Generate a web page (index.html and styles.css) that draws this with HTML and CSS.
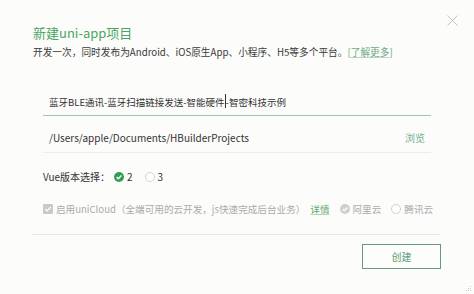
FILE: index.html
```html
<!DOCTYPE html>
<html>
  <head>
    <meta charset="utf-8" />
    <meta name="viewport" content="width=device-width, initial-scale=1" />
    <link rel="stylesheet" href="styles.css">
  </head>
  <body>
    <div class="dialog">
      <span class="close">
        <svg width="11" height="11" viewBox="0 0 11 11">
          <path d="M0.5 0.5 L10.5 10.5 M10.5 0.5 L0.5 10.5" stroke="#c4c4c4" stroke-width="1" fill="none" />
        </svg>
      </span>
      <div class="header">
        <div class="title">新建uni-app项目</div>
        <div class="subtitle">开发一次，同时发布为Android、iOS原生App、小程序、H5等多个平台。<a class="more">[了解更多]</a></div>
      </div>

      <div class="form">
        <div class="field field-name">
          <span class="value">蓝牙BLE通讯-蓝牙扫描链接发送-智能硬件<span class="caret"></span>-智密科技示例</span>
        </div>
        <div class="field field-path">
          <span class="value">/Users/apple/Documents/HBuilderProjects</span>
          <span class="browse">浏览</span>
        </div>

        <div class="row row-vue">
          <span class="label">Vue版本选择：</span>
          <span class="option">
            <svg class="icon" width="10" height="10" viewBox="0 0 10 10">
              <circle cx="5" cy="5" r="5" fill="#2f9e52" />
              <path d="M2.6 5.1 L4.3 6.7 L7.4 3.5" stroke="#fff" stroke-width="1.4" fill="none" />
            </svg>
            2
          </span>
          <span class="option">
            <svg class="icon" width="10" height="10" viewBox="0 0 10 10">
              <circle cx="5" cy="5" r="4.5" fill="#fff" stroke="#d2d2d2" stroke-width="1" />
            </svg>
            3
          </span>
        </div>

        <div class="row row-cloud">
          <svg class="icon" width="10" height="10" viewBox="0 0 10 10">
            <rect x="0" y="0" width="10" height="10" rx="1" fill="#c9c9c9" />
            <path d="M2.3 5 L4.2 6.9 L7.8 3" stroke="#fff" stroke-width="1.3" fill="none" />
          </svg>
          <span class="cloud-text">启用uniCloud（全端可用的云开发，js快速完成后台业务）</span>
          <a class="detail">详情</a>
          <span class="option">
            <svg class="icon" width="10" height="10" viewBox="0 0 10 10">
              <circle cx="5" cy="5" r="5" fill="#cfcfcf" />
              <path d="M2.6 5.1 L4.3 6.7 L7.4 3.5" stroke="#fff" stroke-width="1.3" fill="none" />
            </svg>
            阿里云
          </span>
          <span class="option">
            <svg class="icon" width="10" height="10" viewBox="0 0 10 10">
              <circle cx="5" cy="5" r="4.5" fill="#fff" stroke="#cfcfcf" stroke-width="1" />
            </svg>
            腾讯云
          </span>
        </div>
      </div>

      <div class="divider"></div>

      <div class="footer">
        <button class="btn-create">创建</button>
      </div>

      <span class="grip">
        <svg width="6" height="6" viewBox="0 0 6 6">
          <rect x="4" y="0" width="1" height="1" fill="#c8c8c8" />
          <rect x="2" y="2" width="1" height="1" fill="#c8c8c8" />
          <rect x="4" y="2" width="1" height="1" fill="#c8c8c8" />
          <rect x="0" y="4" width="1" height="1" fill="#c8c8c8" />
          <rect x="2" y="4" width="1" height="1" fill="#c8c8c8" />
          <rect x="4" y="4" width="1" height="1" fill="#c8c8c8" />
        </svg>
      </span>
    </div>
  </body>
</html>
```

FILE: styles.css
```css
html,
body,
div {
  margin: 0;
  padding: 0;
  box-sizing: border-box;
}

body {
  background-color: #fcfcfa;
  font-family: "Noto Sans CJK SC", sans-serif;
  color: #333333;
}

.dialog {
  position: relative;
  height: 294px;
  padding-top: 25px;
}

.close {
  position: absolute;
  top: 15px;
  right: 16px;
  line-height: 0;
}

.header {
  padding-left: 33px;
}
.header .title {
  font-size: 13px;
  line-height: 16px;
  color: #4aa462;
}
.header .subtitle {
  margin-top: 4px;
  font-size: 9.7px;
  line-height: 14px;
  color: #3a3a3a;
}
.header .more {
  color: #6aa884;
  text-decoration: underline;
  text-decoration-color: #b9d6c4;
}

.form {
  margin: 27px 43px 0;
}

.field {
  display: flex;
  align-items: center;
  justify-content: space-between;
  padding: 0 6px;
  font-size: 10px;
  line-height: 16px;
  white-space: nowrap;
}
.field-name {
  padding-top: 8px;
  padding-bottom: 5px;
  font-size: 9.5px;
  border-bottom: 1px solid #9ccaa9;
}
.field-path {
  padding-top: 14px;
  padding-bottom: 6px;
  border-bottom: 1px solid #ececea;
}
.field .caret {
  display: inline-block;
  width: 1px;
  height: 14px;
  background-color: #333;
  vertical-align: -2px;
}
.field .browse {
  color: #78b08f;
  font-size: 10px;
}

.row {
  display: flex;
  align-items: center;
  font-size: 10px;
  line-height: 16px;
  white-space: nowrap;
}
.row .icon {
  display: block;
  flex-shrink: 0;
}
.row .option {
  display: flex;
  align-items: center;
  gap: 3px;
}

.row-vue {
  margin-top: 16px;
}
.row-vue .label {
  width: 71px;
}
.row-vue .option {
  margin-right: 12px;
}

.row-cloud {
  margin-top: 16px;
  font-size: 9.6px;
  color: #ababab;
}
.row-cloud .cloud-text {
  margin-left: 3px;
}
.row-cloud .detail {
  margin-left: 5px;
  color: #5aaa6c;
  text-decoration: underline;
  text-decoration-color: #b5d8bd;
}
.row-cloud .option {
  margin-left: 10px;
}

.divider {
  margin: 17px 34px 0 32px;
  border-top: 1px solid #e8e8e6;
}

.footer {
  display: flex;
  justify-content: flex-end;
  padding: 9px 33px 0 0;
}
.btn-create {
  width: 79px;
  height: 25px;
  background-color: #fdfdfb;
  border: 1.5px solid #639c7c;
  color: #5a9c72;
  font-family: "Noto Sans CJK SC", sans-serif;
  font-size: 10px;
  padding: 0;
}

.grip {
  position: absolute;
  right: 2px;
  bottom: 2px;
  line-height: 0;
}
```
